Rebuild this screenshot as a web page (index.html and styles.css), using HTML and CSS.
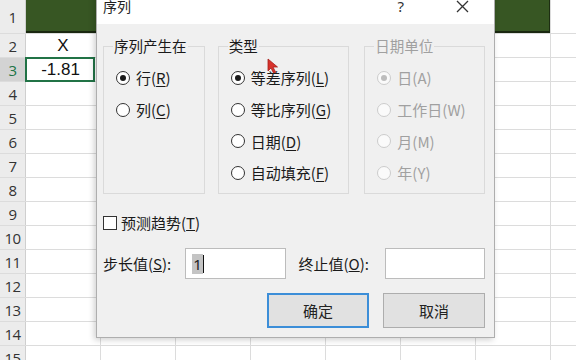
FILE: index.html
```html
<!DOCTYPE html>
<html lang="zh-CN">
<head>
  <meta charset="utf-8">
  <title>序列</title>
  <link rel="stylesheet" href="styles.css">
</head>
<body>
  <div class="sheet">
    <div class="row first"><div class="rh">1</div><div class="cells"><div class="banner"></div></div></div>
    <div class="row"><div class="rh">2</div><div class="cells"><div class="cell">X</div></div></div>
    <div class="row"><div class="rh active">3</div><div class="cells"><div class="cell selected">-1.81</div></div></div>
    <div class="row"><div class="rh">4</div><div class="cells"></div></div>
    <div class="row"><div class="rh">5</div><div class="cells"></div></div>
    <div class="row"><div class="rh">6</div><div class="cells"></div></div>
    <div class="row"><div class="rh">7</div><div class="cells"></div></div>
    <div class="row"><div class="rh">8</div><div class="cells"></div></div>
    <div class="row"><div class="rh">9</div><div class="cells"></div></div>
    <div class="row"><div class="rh">10</div><div class="cells"></div></div>
    <div class="row"><div class="rh">11</div><div class="cells"></div></div>
    <div class="row"><div class="rh">12</div><div class="cells"></div></div>
    <div class="row"><div class="rh">13</div><div class="cells"></div></div>
    <div class="row"><div class="rh">14</div><div class="cells"></div></div>
    <div class="row"><div class="rh">15</div><div class="cells"></div></div>
  </div>

  <!-- Series dialog -->
  <div class="dialog">
    <div class="titlebar">
      <span class="title">序列</span>
      <span class="help">?</span>
      <svg class="close" width="13" height="13" viewBox="0 0 13 13">
        <path d="M1 1 L12 12 M12 1 L1 12" stroke="#333" stroke-width="1.3" fill="none"/>
      </svg>
    </div>

    <div class="body">
      <div class="groups">
        <fieldset class="group g-series">
          <legend>序列产生在</legend>
          <div class="opt"><span class="radio checked"></span>行(<u>R</u>)</div>
          <div class="opt"><span class="radio"></span>列(<u>C</u>)</div>
        </fieldset>

        <fieldset class="group g-type">
          <legend>类型</legend>
          <div class="opt"><span class="radio checked"></span>等差序列(<u>L</u>)</div>
          <div class="opt"><span class="radio"></span>等比序列(<u>G</u>)</div>
          <div class="opt"><span class="radio"></span>日期(<u>D</u>)</div>
          <div class="opt"><span class="radio"></span>自动填充(<u>F</u>)</div>
        </fieldset>

        <fieldset class="group g-date disabled">
          <legend>日期单位</legend>
          <div class="opt"><span class="radio checked"></span>日(A)</div>
          <div class="opt"><span class="radio"></span>工作日(W)</div>
          <div class="opt"><span class="radio"></span>月(M)</div>
          <div class="opt"><span class="radio"></span>年(Y)</div>
        </fieldset>
      </div>

      <div class="trend"><span class="checkbox"></span>预测趋势(<u>T</u>)</div>

      <div class="fields">
        <label class="lbl lbl-step">步长值(<u>S</u>):</label>
        <div class="input"><span class="sel-text">1</span><span class="caret"></span></div>
        <label class="lbl lbl-stop">终止值(<u>O</u>):</label>
        <div class="input"></div>
      </div>

      <div class="buttons">
        <button class="btn default">确定</button>
        <button class="btn">取消</button>
      </div>
    </div>
  </div>

  <svg class="pointer" width="12" height="16" viewBox="0 0 12 16">
    <path d="M1 1 L1 13 L4 10 L6.5 15 L8.5 14 L6 9 L10.5 9 Z" fill="#d8322c" stroke="#a5201b" stroke-width="0.8"/>
  </svg>
</body>
</html>
```

FILE: styles.css
```css
body {
  margin: 0;
  background-color: #ffffff;
  font-family: "Noto Sans CJK SC", "Noto Sans", sans-serif;
  color: #1a1a1a;
  overflow: hidden;
  width: 576px;
  height: 360px;
  position: relative;
}

/* spreadsheet */

.sheet {
  width: 576px;
}

.row {
  display: flex;
  height: 24px;
  box-sizing: border-box;
  border-bottom: 1px solid #dcdcdc;
}

.row.first {
  height: 34px;
}

.rh {
  width: 26px;
  flex: none;
  box-sizing: border-box;
  background-color: #ececec;
  border-right: 1px solid #cfcfcf;
  color: #333;
  font-family: "Open Sans", "Noto Sans", sans-serif;
  font-size: 15px;
  text-align: center;
  display: flex;
  align-items: center;
  justify-content: center;
  letter-spacing: -0.5px;
}

.rh.active {
  background-color: #d3d3d3;
  color: #217346;
}

.cells {
  flex: 1;
  position: relative;
  background-image: repeating-linear-gradient(90deg, transparent 0 74px, #dcdcdc 74px 75px);
}

.banner {
  width: 524px;
  height: 33px;
  box-sizing: border-box;
  background-color: #375623;
  border-right: 1px solid #1d2e12;
  border-bottom: 2px solid #1a2810;
}

.cell {
  width: 74px;
  height: 100%;
  font-family: "Liberation Sans", Arial, sans-serif;
  font-size: 17px;
  text-align: center;
  line-height: 23px;
  color: #111;
}

.cell.selected {
  box-sizing: border-box;
  border: 2px solid #217346;
  margin-left: -1px;
  width: 70px;
  height: 25px;
  margin-top: -1px;
  line-height: 21px;
  padding-left: 1px;
}

/* dialog */

.dialog {
  position: absolute;
  left: 96px;
  top: -10px;
  width: 399px;
  height: 348px;
  box-sizing: border-box;
  border: 1px solid #aeaeae;
  background-color: #f0f0f0;
  box-shadow: -2px 2px 6px rgba(0, 0, 0, 0.18);
  display: flex;
  flex-direction: column;
  font-size: 15px;
}

.titlebar {
  height: 33px;
  background-color: #ffffff;
  display: flex;
  align-items: flex-start;
  padding: 5px 0 0 6px;
  box-sizing: border-box;
  flex: none;
}

.title {
  line-height: 20px;
  font-size: 14px;
  color: #222;
}

.help {
  margin-left: auto;
  line-height: 20px;
  font-family: "Noto Sans", sans-serif;
  font-size: 15px;
  color: #333;
}

.close {
  margin: 4px 25px 0 52px;
}

.body {
  padding: 12px 9px 10px 6px;
  display: flex;
  flex-direction: column;
}

.groups {
  display: flex;
  gap: 13px;
}

.group {
  margin: 0;
  padding: 0 0 3px 9px;
  border: 1px solid #dadada;
  box-sizing: border-box;
  height: 158px;
}

.group legend {
  padding: 0 1px;
  line-height: 20px;
  font-size: 14.5px;
}

.g-series { width: 102px; }
.g-type { width: 132px; }
.g-date { width: 121px; margin-left: 2px; }

.group .opt:first-of-type {
  margin-top: 6px;
}

.opt {
  display: flex;
  align-items: center;
  height: 31.7px;
  white-space: nowrap;
}

.opt u {
  text-decoration-thickness: 1px;
  text-underline-offset: 2px;
}

.radio {
  width: 14px;
  height: 14px;
  border: 1px solid #333;
  border-radius: 50%;
  background-color: #ffffff;
  box-sizing: border-box;
  margin: 0 6px 0 3px;
  position: relative;
  flex: none;
}

.radio.checked::after {
  content: "";
  position: absolute;
  left: 3px;
  top: 3px;
  width: 6px;
  height: 6px;
  border-radius: 50%;
  background-color: #1a1a1a;
}

.disabled legend,
.disabled .opt {
  color: #a0a0a0;
}

.disabled .radio {
  border-color: #cccccc;
  background-color: #fafafa;
}

.disabled .radio.checked::after {
  background-color: #bdbdbd;
}

.trend {
  margin-top: 19px;
  display: flex;
  align-items: center;
  line-height: 20px;
}

.checkbox {
  width: 14px;
  height: 14px;
  box-sizing: border-box;
  border: 1px solid #333;
  background-color: #fff;
  margin-right: 4px;
}

.fields {
  margin-top: 15px;
  display: flex;
  align-items: center;
}

.lbl {
  line-height: 20px;
}

.lbl-step { width: 83px; }
.lbl-stop { width: 87px; margin-left: 13px; }

.input {
  width: 101px;
  height: 31px;
  box-sizing: border-box;
  border: 1px solid #bcbcbc;
  background-color: #fff;
  display: flex;
  align-items: center;
  padding-left: 6px;
}

.sel-text {
  background-color: #c4c4c4;
  color: #222;
  font-family: "Noto Sans", sans-serif;
  font-size: 15px;
  line-height: 20px;
  padding: 0 1px;
}

.caret {
  width: 1px;
  height: 18px;
  background-color: #111;
}

.buttons {
  margin-top: 14px;
  display: flex;
  justify-content: flex-end;
  gap: 14px;
}

.btn {
  width: 102px;
  height: 35px;
  font-family: "Noto Sans CJK SC", sans-serif;
  font-size: 15px;
  color: #222;
  background-color: #e1e1e1;
  border: 1px solid #adadad;
  padding: 0;
}

.btn.default {
  border: 2px solid #3c8ed8;
}

.pointer {
  position: absolute;
  left: 267px;
  top: 58px;
}
```
